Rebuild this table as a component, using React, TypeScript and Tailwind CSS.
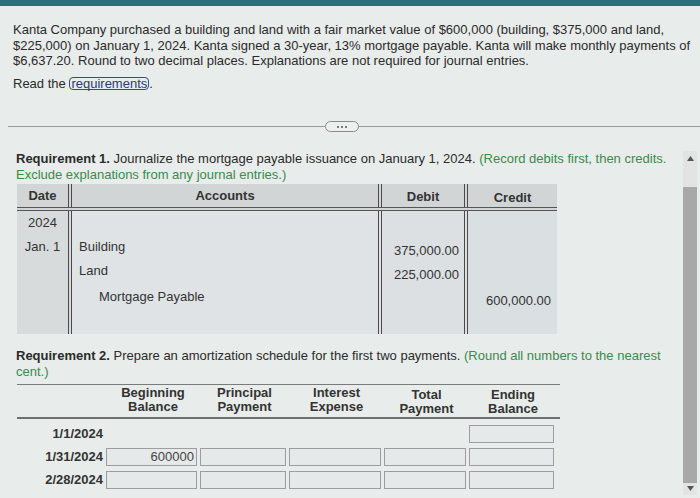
import React from "react";

const green = "text-[#3b8a4e]";

function Scrollbar() {
  return (
    <div className="w-[14px] h-full bg-[#e2e4e3] flex flex-col items-center">
      <div className="h-[36px] w-full flex justify-center pt-[5px]">
        <svg width="7" height="5" viewBox="0 0 7 5"><path d="M0 5 L3.5 0 L7 5 Z" fill="#555" /></svg>
      </div>
      <div className="flex-1 w-full bg-[#a7a8a8]" />
      <div className="h-[12px] w-full flex justify-center pt-[3px]">
        <svg width="7" height="5" viewBox="0 0 7 5"><path d="M0 0 L3.5 5 L7 0 Z" fill="#555" /></svg>
      </div>
    </div>
  );
}

function JournalTable() {
  const vline = "border-r-[4px] border-double border-[#4a4a4a]";
  return (
    <div className="ml-[4px] w-[540px] flex flex-col text-[13px] text-[#333]">
      <div className="flex h-[27px] bg-[#d2d5d6] border-b-[4px] border-double border-[#555] font-bold">
        <div className={`w-[55px] flex items-center justify-center ${vline}`}>Date</div>
        <div className={`w-[310px] flex items-center justify-center ${vline}`}>Accounts</div>
        <div className={`w-[86px] flex items-center justify-center pt-[3px] ${vline}`}>Debit</div>
        <div className="w-[89px] flex items-center justify-center pt-[5px]">Credit</div>
      </div>
      <div className="flex h-[123px]">
        <div className={`w-[55px] bg-[#d8dbdc] flex flex-col items-center ${vline}`}>
          <div className="h-[24px] flex items-center">2024</div>
          <div className="h-[24px] flex items-center">Jan. 1</div>
        </div>
        <div className={`w-[310px] bg-[#dfe3e5] flex flex-col pl-[7px] ${vline}`}>
          <div className="h-[24px]" />
          <div className="h-[24px] flex items-center">Building</div>
          <div className="h-[24px] flex items-center">Land</div>
          <div className="h-[27px] flex items-center pl-[20px]">Mortgage Payable</div>
        </div>
        <div className={`w-[86px] bg-[#dce0e3] flex flex-col items-end pr-[5px] ${vline}`}>
          <div className="h-[28px]" />
          <div className="h-[24px] flex items-center">375,000.00</div>
          <div className="h-[24px] flex items-center">225,000.00</div>
        </div>
        <div className="w-[89px] bg-[#dadfe2] flex flex-col items-end pr-[6px]">
          <div className="h-[78px]" />
          <div className="h-[24px] flex items-center">600,000.00</div>
        </div>
      </div>
    </div>
  );
}

function Box({ value }: { value?: string }) {
  return (
    <div className="h-[18px] mr-[3px] border border-[#9c9e9e] bg-[#e6e9e9] flex items-center justify-end pr-[2px] text-[13px] text-[#444]">
      {value ?? ""}
    </div>
  );
}

function Amortization() {
  const cols = "grid grid-cols-[89px_94px_89px_95px_85px_88px]";
  const row = `${cols} h-[18px] items-center`;
  return (
    <div className="ml-[4px] w-[543px] text-[13px] text-[#333]">
      <div className={`${cols} border-t border-[#7a7c7c] border-b-2 border-b-[#6f7171] pt-[1px] pb-[1px] font-bold leading-[14px]`}>
        <div />
        <div className="text-center">Beginning<br />Balance</div>
        <div className="text-center">Principal<br />Payment</div>
        <div className="text-center">Interest<br />Expense</div>
        <div className="text-center pt-[2px]">Total<br />Payment</div>
        <div className="text-center pt-[2px]">Ending<br />Balance</div>
      </div>
      <div className="flex flex-col gap-[5px] pt-[5px]">
        <div className={row}>
          <div className="text-right pr-[3px] font-bold">1/1/2024</div>
          <div /><div /><div /><div />
          <Box />
        </div>
        <div className={row}>
          <div className="text-right pr-[3px] font-bold">1/31/2024</div>
          <Box value="600000" />
          <Box />
          <Box />
          <Box />
          <Box />
        </div>
        <div className={row}>
          <div className="text-right pr-[3px] font-bold">2/28/2024</div>
          <Box />
          <Box />
          <Box />
          <Box />
          <Box />
        </div>
      </div>
    </div>
  );
}

export default function App() {
  return (
    <div
      className="w-[700px] h-[498px] overflow-hidden bg-[#e8ecea] flex flex-col text-[#2b2b2b]"
      style={{ fontFamily: '"Liberation Sans", Arial, sans-serif' }}
    >
      <div className="h-[6px] bg-[#2f6e78] shrink-0" />
      <div className="pl-[13px] pr-[8px] pt-[16px] text-[13px] leading-[15.5px]">
        <p>
          Kanta Company purchased a building and land with a fair market value of $600,000 (building, $375,000 and land,
          $225,000) on January 1, 2024. Kanta signed a 30-year, 13% mortgage payable. Kanta will make monthly payments of
          $6,637.20. Round to two decimal places. Explanations are not required for journal entries.
        </p>
        <p className="mt-[7px]">
          Read the{" "}
          <span className="inline-block border-[1.5px] border-[#3a4a86] rounded-[4px] px-[1px] leading-[11px] text-[#2b3a7a]">
            requirements
          </span>
          .
        </p>
      </div>
      <div className="mt-[30px] ml-[8px] flex items-center">
        <div className="w-[317px] h-px bg-[#9a9c9c]" />
        <div className="w-[34px] h-[11px] rounded-full border border-[#8a8c8c] bg-[#eef0ef] flex items-center justify-center gap-[2px]">
          <span className="w-[2px] h-[2px] bg-[#555] rounded-full" />
          <span className="w-[2px] h-[2px] bg-[#555] rounded-full" />
          <span className="w-[2px] h-[2px] bg-[#555] rounded-full" />
        </div>
        <div className="flex-1 h-px bg-[#9a9c9c]" />
      </div>
      <div className="flex-1 flex min-h-0 mt-[19px]">
        <div className="flex-1 min-w-0 pl-[13px]">
          <p className="text-[13px] leading-[15.5px] pl-[3px] whitespace-nowrap">
            <span className="font-bold">Requirement 1.</span> Journalize the mortgage payable issuance on January 1, 2024.{" "}
            <span className={green}>(Record debits first, then credits.</span>
            <br />
            <span className={green}>Exclude explanations from any journal entries.)</span>
          </p>
          <div className="mt-[2px]">
            <JournalTable />
          </div>
          <p className="mt-[14px] text-[13px] leading-[15.5px] pl-[3px] whitespace-nowrap">
            <span className="font-bold">Requirement 2.</span> Prepare an amortization schedule for the first two payments.{" "}
            <span className={green}>(Round all numbers to the nearest</span>
            <br />
            <span className={green}>cent.)</span>
          </p>
          <div className="mt-[5px]">
            <Amortization />
          </div>
        </div>
        <div className="pr-[3px] pb-[3px]">
          <Scrollbar />
        </div>
      </div>
    </div>
  );
}
